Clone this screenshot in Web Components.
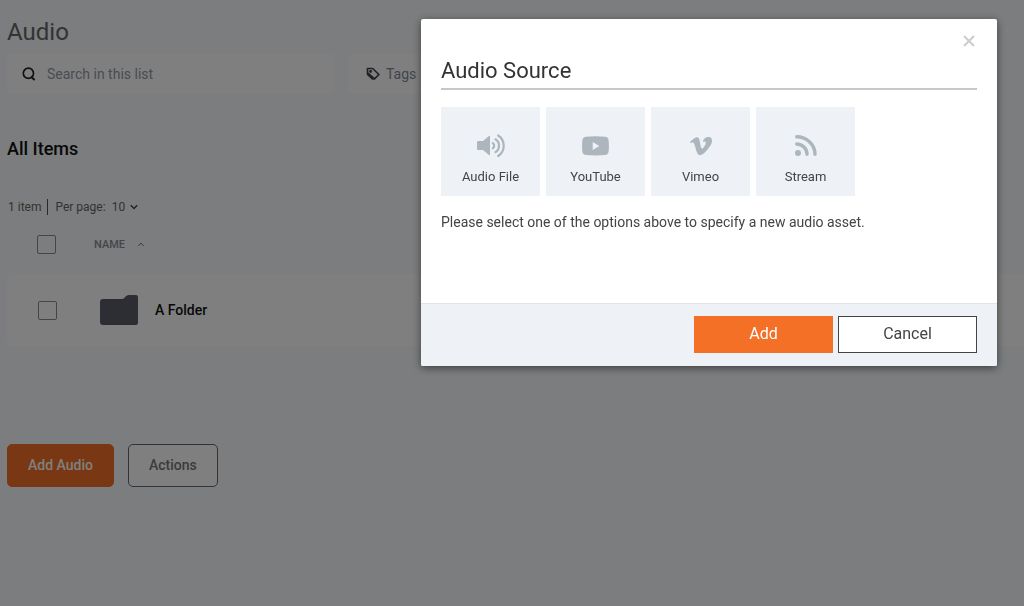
<!DOCTYPE html>
<html lang="en">
<head>
<meta charset="utf-8">
<title>Audio</title>
<style>
  body { margin: 0; min-height: 100vh; background: #f8fafc; color: #111; font: 14px/20px Roboto, "Noto Sans", sans-serif; }
</style>
</head>
<body>
<audio-library>
  <list-filters></list-filters>
  <item-list></item-list>
  <page-actions></page-actions>
</audio-library>
<modal-dialog heading="Audio Source">
  <source-tile icon="file">Audio File</source-tile>
  <source-tile icon="youtube">YouTube</source-tile>
  <source-tile icon="vimeo">Vimeo</source-tile>
  <source-tile icon="stream">Stream</source-tile>
  <p slot="hint" style="margin:0">Please select one of the options above to specify a new audio asset.</p>
</modal-dialog>

<script>
const define = (name, html, setup) => customElements.define(name, class extends HTMLElement {
  constructor() {
    super();
    const t = document.createElement('template');
    t.innerHTML = html;
    this.attachShadow({ mode: 'open' }).append(t.content.cloneNode(true));
  }
  connectedCallback() { if (setup) setup(this, this.shadowRoot); }
});

define('audio-library', `
<style>
  :host { display: block; padding: 16px 0 16px 7px; }
  h1 { margin: 0 0 6px; font-size: 24px; line-height: 32px; font-weight: 400; color: #666; }
</style>
<h1>Audio</h1><slot></slot>`);

define('list-filters', `
<style>
  :host { display: flex; gap: 14px; padding-right: 14px; }
  .field { display: flex; align-items: center; height: 40px; box-sizing: border-box; background: #fff; border-radius: 5px; }
  .search { flex: 0 1 327px; padding: 0 15px; gap: 11px; }
  .tags { flex: 0 1 327px; padding: 0 18px; gap: 6px; }
  svg { flex: none; }
  input { flex: 1; min-width: 0; border: 0; padding: 0; background: none; font: inherit; color: #333; outline: 0; }
  input::placeholder { color: #929aa5; opacity: 1; }
  button { border: 0; padding: 0; background: none; font: inherit; color: #7f8a9c; }
</style>
<div class="field search">
  <svg width="14" height="14" viewBox="0 0 14 14" fill="none" stroke="#222" stroke-width="1.7"><circle cx="6.4" cy="6.2" r="5.1"/><path d="M9 9.5l3.6 3.6" stroke-width="2"/></svg>
  <input type="search" placeholder="Search in this list" aria-label="Search in this list">
</div>
<div class="field tags">
  <svg width="14" height="14" viewBox="0 0 14 14" fill="none" stroke="#40434b"><path d="M1.500 1.500h5.200l6.200 6-4.700 4.700-6.700-6z" stroke-width="1.7" stroke-linejoin="round"/><path d="M1.500 6.500l5.900 5.400" stroke-width="3"/><circle cx="4.6" cy="4.4" r="1.1" fill="#40434b"/></svg>
  <button type="button">Tags</button>
</div>`);

define('item-list', `
<style>
  :host { display: block; padding-top: 43px; }
  h2 { margin: 0; font-size: 18px; line-height: 24px; font-weight: 500; }
  .meta { display: flex; align-items: center; height: 16px; margin: 38px 0 18px; font-size: 12px; line-height: 16px; color: #666; }
  .meta span { padding: 0 6px 0 1px; border-right: 1px solid #555; }
  .meta label { padding: 0 6px 0 7px; }
  .pick { display: flex; align-items: center; gap: 4px; }
  select { appearance: none; border: 0; padding: 0; margin: 0; background: none; font: inherit; color: inherit; }
  table { width: 100%; border-collapse: collapse; }
  th { height: 23px; padding: 0 0 18px; font-size: 11px; line-height: 16px; font-weight: 500; text-align: left; color: #8a8d94; }
  td { height: 72px; padding: 0; background: #fff; font-weight: 500; }
  th.check { width: 87px; padding-left: 30px; box-sizing: border-box; }
  td.check { padding-left: 31px; border-radius: 6px 0 0 6px; }
  input { appearance: none; display: block; width: 18px; height: 18px; margin: 0; border: 1px solid #888b92; border-radius: 2px; box-sizing: border-box; width: 19px; height: 19px; }
  .heading { display: flex; align-items: center; gap: 13px; }
  .item { display: flex; align-items: center; gap: 16px; padding-left: 6px; }
</style>
<h2>All Items</h2>
<div class="meta">
  <span>1 item</span>
  <label for="per">Per page:</label>
  <div class="pick"><select id="per"><option>10</option></select>
  <svg width="8" height="6" viewBox="0 0 8 6" fill="none" stroke="#444" stroke-width="1.4"><path d="M.8 1.2L4 4.5l3.2-3.3"/></svg></div>
</div>
<table>
  <thead><tr>
    <th class="check"><input type="checkbox" aria-label="Select all"></th>
    <th><div class="heading">NAME <svg width="6" height="5" viewBox="0 0 6 5" fill="none" stroke="#777"><path d="M.4 4L3 1l2.6 3"/></svg></div></th>
  </tr></thead>
  <tbody><tr>
    <td class="check"><input type="checkbox" aria-label="Select A Folder"></td>
    <td><div class="item">
      <svg width="39" height="30" viewBox="0 0 39 30" fill="#5b5c68"><path d="M3 4h19c3 0 3.200-4 7-4h7a2 2 0 0 1 2 2v26a2 2 0 0 1-2 2H3a3 3 0 0 1-3-3V7a3 3 0 0 1 3-3z"/></svg>
      A Folder</div></td>
  </tr></tbody>
</table>`);

define('page-actions', `
<style>
  :host { display: flex; gap: 14px; padding-top: 98px; }
  button { height: 43px; padding: 0 20px 2px; border: 1px solid #f37026; border-radius: 5px; background: #f37026; color: #fff; font: inherit; font-weight: 500; }
  .plain { border-color: #666; background: #fff; color: #777; }
</style>
<button type="button">Add Audio</button><button type="button" class="plain">Actions</button>`);

define('modal-dialog', `
<style>
  :host { position: fixed; inset: 0; display: flex; justify-content: flex-end; align-items: flex-start; padding: 19px 27px; background: rgba(0,0,0,.5); }
  section { width: 576px; max-width: 100%; background: #fff; border-radius: 2px; box-shadow: 0 2px 8px rgba(0,0,0,.5); color: #444; overflow: hidden; }
  .body { display: flex; flex-direction: column; padding: 12px 20px 0; min-height: 284px; box-sizing: border-box; }
  .close { align-self: flex-end; width: 20px; height: 20px; padding: 0; border: 0; background: none; display: grid; place-items: center; margin-right: -2px; }
  h2 { margin: 5px 0 17px; padding-bottom: 2px; border-bottom: 2px solid #c8c8c8; font-size: 22px; line-height: 30px; font-weight: 400; color: #333; }
  .tiles { display: flex; gap: 6px; margin-bottom: 16px; }
  footer { display: flex; justify-content: flex-end; gap: 5px; padding: 12px 20px 13px; border-top: 1px solid #dfe3e8; background: #eef2f7; }
  footer button { width: 139px; height: 37px; padding: 0 0 2px; border: 1px solid #f37026; background: #f37026; color: #fff; font: inherit; font-size: 16px; }
  footer .plain { border-color: #444; background: #fff; color: #444; }
</style>
<section role="dialog" aria-labelledby="title">
  <div class="body">
    <button class="close" type="button" aria-label="Close"><svg width="12" height="12" viewBox="0 0 12 12" stroke="#ccc" stroke-width="2"><path d="M1 1l10 10M11 1L1 11"/></svg></button>
    <h2 id="title"></h2>
    <div class="tiles"><slot></slot></div>
    <slot name="hint"></slot>
  </div>
  <footer><button type="button">Add</button><button type="button" class="plain">Cancel</button></footer>
</section>`, (el, root) => { root.querySelector('h2').textContent = el.getAttribute('heading'); });

const icons = {
  file: `<svg width="28" height="24" viewBox="0 0 28 24"><path fill="currentColor" d="M1 7h5l6-5q1-.6 1 .4v18.200q0 1-1 .4l-6-5H1q-1 0-1-1V8q0-1 1-1z"/><g fill="none" stroke="currentColor" stroke-width="2.200" stroke-linecap="round"><path d="M15.800 9.200a3 3 0 0 1 0 5"/><path d="M18.500 5.300a7.600 7.600 0 0 1 0 12.800"/><path d="M21.200 1.500a12.300 12.300 0 0 1 0 20.500"/></g></svg>`,
  youtube: `<svg width="27" height="24" viewBox="0 0 27 24"><path fill="currentColor" fill-rule="evenodd" d="M4 2.700Q13.500 2 23 2.700q3.200.2 3.600 3.500.6 5.800 0 11.600-.4 3-3.600 3.300-9.500.7-19 0-3.200-.3-3.600-3.300-.6-5.800 0-11.600Q.8 2.900 4 2.700zM10.700 8v8l6.600-4z"/></svg>`,
  vimeo: `<svg width="22" height="24" viewBox="0 0 448 512" preserveAspectRatio="none"><path fill="currentColor" d="M447.800 153.600c-2 43.600-32.400 103.300-91.400 179.100-60.900 79.200-112.400 118.800-154.600 118.800-26.100 0-48.200-24.100-66.300-72.300C100.300 250 85.300 174.300 56.200 174.300c-3.400 0-15.100 7.100-35.200 21.100L0 168.200c51.600-45.300 100.900-95.700 131.800-98.500 34.900-3.400 56.300 20.500 64.400 71.500 28.700 181.500 41.400 208.900 93.600 126.700 18.700-29.600 28.800-52.100 30.200-67.600 4.800-45.900-35.800-42.800-63.300-31 22-72.100 64.100-107.100 126.200-105.100 45.800 1.200 67.500 31.100 64.900 89.400z"/></svg>`,
  stream: `<svg width="22" height="24" viewBox="0 0 22 24"><circle cx="3" cy="19" r="3" fill="currentColor"/><path d="M1.700 10a10.300 10.300 0 0 1 10.300 10.300M1.700 2.800a18.300 17.500 0 0 1 18.300 17.500" fill="none" stroke="currentColor" stroke-width="3.400" stroke-linecap="round"/></svg>`
};
define('source-tile', `
<style>
  :host { display: block; flex: 0 1 99px; }
  button { display: flex; flex-direction: column; align-items: center; width: 100%; height: 89px; padding: 27px 0 0; gap: 9px; border: 0; background: #eef2f7; color: #444; font: inherit; font-size: 13px; line-height: 20px; }
  .icon { height: 24px; color: #adb5bd; }
</style>
<button type="button"><span class="icon" aria-hidden="true"></span><span><slot></slot></span></button>`,
(el, root) => { root.querySelector('.icon').innerHTML = icons[el.getAttribute('icon')]; });
</script>
</body>
</html>
